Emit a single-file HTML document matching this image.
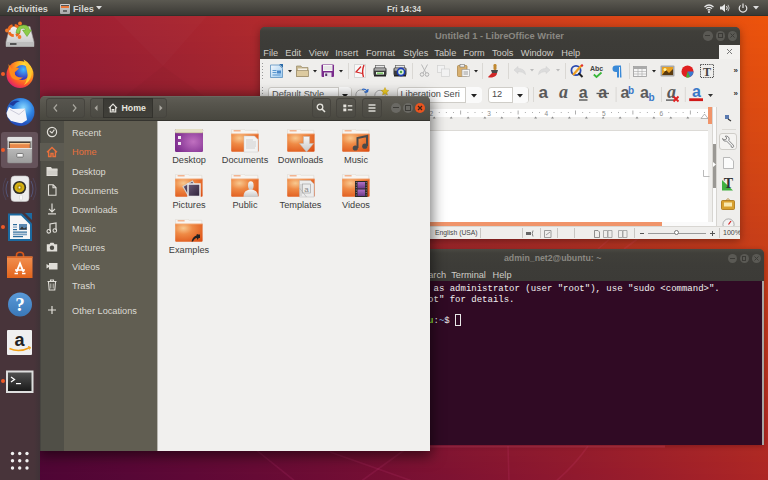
<!DOCTYPE html>
<html><head><meta charset="utf-8">
<style>
*{margin:0;padding:0;box-sizing:border-box}
html,body{width:768px;height:480px;overflow:hidden;font-family:"Liberation Sans",sans-serif}
body{position:relative;background:#9e1d3b}
.a{position:absolute}
svg{position:absolute;overflow:visible}
#wall{left:0;top:0;width:768px;height:480px;overflow:hidden}
#top{z-index:6;left:0;top:0;width:768px;height:16px;background:linear-gradient(#5b5951,#4b4943 50%,#3a3934);border-bottom:1px solid #30312c;color:#d6d6d2;font-size:9px;font-weight:bold;white-space:nowrap}
#dock{left:0;top:16px;width:40px;height:464px;background:linear-gradient(90deg,#48343a 85%,#3f3337);z-index:5}
.dot{position:absolute;left:1px;width:4px;height:4px;border-radius:50%;background:#f05a28}
.t{position:absolute;white-space:nowrap;line-height:1}
</style></head><body>

<svg width="0" height="0" style="position:absolute">
 <defs>
  <radialGradient id="fg" cx=".3" cy=".25" r=".95"><stop offset="0" stop-color="#f8c990"/><stop offset=".35" stop-color="#ef8a45"/><stop offset="1" stop-color="#dc4f14"/></radialGradient>
  <radialGradient id="dg" cx=".65" cy=".55" r=".7"><stop offset="0" stop-color="#c070c0"/><stop offset="1" stop-color="#7a2a8c"/></radialGradient>
  <symbol id="fold" viewBox="0 0 28 23">
   <path d="M0.6 0.3 H13 L14.3 1.3 H26.8 V7 H0.6Z" fill="#f7f5f2" stroke="#d8d2cc" stroke-width=".5"/>
   <rect x="2.6" y="1.4" width="7" height="0.9" fill="#f08a50"/>
   <path d="M0.2 4.7 H27.6 V21.8 Q27.6 22.7 26.7 22.7 H1.1 Q0.2 22.7 0.2 21.8Z" fill="url(#fg)"/>
   <rect x="0.2" y="4.7" width="27.4" height="0.7" fill="#f6b888" opacity=".8"/>
  </symbol>
 </defs>
</svg>
<div id="wall" class="a"><div style="height:6px;background:linear-gradient(90deg,#9c1d35 0px,#a12033 64px,#a72331 128px,#ac272f 192px,#b32a2d 256px,#b92f2a 320px,#c03326 384px,#c73822 448px,#cf3d1e 512px,#d7431a 576px,#df4915 640px,#e74f10 704px,#f0550a 768px)"></div><div style="height:6px;background:linear-gradient(90deg,#9a1d35 0px,#a02033 64px,#a52331 128px,#ab262f 192px,#b12a2d 256px,#b82e2a 320px,#bf3326 384px,#c63723 448px,#ce3d1f 512px,#d5421a 576px,#de4815 640px,#e64e10 704px,#ef550b 768px)"></div><div style="height:6px;background:linear-gradient(90deg,#991d35 0px,#9e1f33 64px,#a42332 128px,#aa262f 192px,#b02a2d 256px,#b72e2a 320px,#be3227 384px,#c53723 448px,#cc3c1f 512px,#d4421a 576px,#dc4816 640px,#e54e10 704px,#ee540b 768px)"></div><div style="height:6px;background:linear-gradient(90deg,#981c35 0px,#9d1f33 64px,#a32232 128px,#a9262f 192px,#af292d 256px,#b62d2a 320px,#bd3227 384px,#c43723 448px,#cb3c1f 512px,#d3411b 576px,#db4716 640px,#e44d11 704px,#ed540b 768px)"></div><div style="height:6px;background:linear-gradient(90deg,#971c35 0px,#9c1f33 64px,#a22232 128px,#a8252f 192px,#ae292d 256px,#b42d2a 320px,#bb3127 384px,#c33623 448px,#ca3b1f 512px,#d2411b 576px,#da4716 640px,#e34d11 704px,#ec530c 768px)"></div><div style="height:6px;background:linear-gradient(90deg,#951c35 0px,#9b1f33 64px,#a02232 128px,#a62530 192px,#ad292d 256px,#b32d2a 320px,#ba3127 384px,#c13623 448px,#c93b1f 512px,#d1401b 576px,#d94616 640px,#e24c11 704px,#ea530c 768px)"></div><div style="height:6px;background:linear-gradient(90deg,#941c35 0px,#991e33 64px,#9f2132 128px,#a52530 192px,#ab282d 256px,#b22c2a 320px,#b93127 384px,#c03524 448px,#c83a20 512px,#d0401b 576px,#d84617 640px,#e14c12 704px,#e9520c 768px)"></div><div style="height:6px;background:linear-gradient(90deg,#931b35 0px,#981e33 64px,#9e2132 128px,#a42430 192px,#aa282d 256px,#b12c2a 320px,#b83027 384px,#bf3524 448px,#c73a20 512px,#cf3f1c 576px,#d74517 640px,#df4b12 704px,#e8520d 768px)"></div><div style="height:6px;background:linear-gradient(90deg,#911b35 0px,#971e33 64px,#9d2132 128px,#a32430 192px,#a9282d 256px,#b02c2b 320px,#b73027 384px,#be3524 448px,#c63a20 512px,#ce3f1c 576px,#d64517 640px,#de4b12 704px,#e7510d 768px)"></div><div style="height:6px;background:linear-gradient(90deg,#901b35 0px,#961d33 64px,#9b2032 128px,#a12430 192px,#a8272d 256px,#ae2b2b 320px,#b52f28 384px,#bd3424 448px,#c43920 512px,#cc3e1c 576px,#d54418 640px,#dd4a13 704px,#e6500d 768px)"></div><div style="height:6px;background:linear-gradient(90deg,#8f1b35 0px,#941d34 64px,#9a2032 128px,#a02330 192px,#a7272e 256px,#ad2b2b 320px,#b42f28 384px,#bc3424 448px,#c33921 512px,#cb3e1c 576px,#d44418 640px,#dc4a13 704px,#e5500e 768px)"></div><div style="height:6px;background:linear-gradient(90deg,#8e1a35 0px,#931d34 64px,#992032 128px,#9f2330 192px,#a5272e 256px,#ac2a2b 320px,#b32f28 384px,#bb3325 448px,#c23821 512px,#ca3d1d 576px,#d34318 640px,#db4913 704px,#e44f0e 768px)"></div><div style="height:6px;background:linear-gradient(90deg,#8d1a35 0px,#921d34 64px,#981f32 128px,#9e2330 192px,#a4262e 256px,#ab2a2b 320px,#b22e28 384px,#b93325 448px,#c13821 512px,#c93d1d 576px,#d14318 640px,#da4813 704px,#e34f0e 768px)"></div><div style="height:6px;background:linear-gradient(90deg,#8b1a35 0px,#911c34 64px,#971f32 128px,#9d2230 192px,#a3262e 256px,#aa2a2b 320px,#b12e28 384px,#b83225 448px,#c03721 512px,#c83c1d 576px,#d04219 640px,#d94814 704px,#e24e0f 768px)"></div><div style="height:6px;background:linear-gradient(90deg,#8a1a35 0px,#901c34 64px,#951f32 128px,#9c2230 192px,#a2252e 256px,#a9292b 320px,#b02d28 384px,#b73225 448px,#bf3721 512px,#c73c1d 576px,#cf4219 640px,#d84714 704px,#e14e0f 768px)"></div><div style="height:6px;background:linear-gradient(90deg,#891935 0px,#8e1c34 64px,#941e32 128px,#9a2230 192px,#a1252e 256px,#a8292c 320px,#af2d29 384px,#b63225 448px,#be3622 512px,#c63c1e 576px,#ce4119 640px,#d74714 704px,#e04d0f 768px)"></div><div style="height:6px;background:linear-gradient(90deg,#881935 0px,#8d1b34 64px,#931e32 128px,#992130 192px,#a0252e 256px,#a6282c 320px,#ae2d29 384px,#b53125 448px,#bd3622 512px,#c53b1e 576px,#cd4119 640px,#d64615 704px,#df4d10 768px)"></div><div style="height:6px;background:linear-gradient(90deg,#861935 0px,#8c1b34 64px,#921e32 128px,#982130 192px,#9f242e 256px,#a5282c 320px,#ac2c29 384px,#b43126 448px,#bc3522 512px,#c43b1e 576px,#cc401a 640px,#d54615 704px,#de4c10 768px)"></div><div style="height:6px;background:linear-gradient(90deg,#851835 0px,#8b1b34 64px,#911e32 128px,#972131 192px,#9d242e 256px,#a4282c 320px,#ab2c29 384px,#b33026 448px,#bb3522 512px,#c33a1e 576px,#cb3f1a 640px,#d44515 704px,#dd4b10 768px)"></div><div style="height:6px;background:linear-gradient(90deg,#841835 0px,#8a1b34 64px,#901d32 128px,#962031 192px,#9c242f 256px,#a3272c 320px,#aa2b29 384px,#b23026 448px,#ba3422 512px,#c23a1f 576px,#ca3f1a 640px,#d34516 704px,#dc4b11 768px)"></div><div style="height:6px;background:linear-gradient(90deg,#831835 0px,#891a34 64px,#8e1d32 128px,#952031 192px,#9b232f 256px,#a2272c 320px,#a92b29 384px,#b12f26 448px,#b93423 512px,#c1391f 576px,#c93e1b 640px,#d24416 704px,#db4a11 768px)"></div><div style="height:6px;background:linear-gradient(90deg,#821835 0px,#871a34 64px,#8d1d32 128px,#942031 192px,#9a232f 256px,#a1262c 320px,#a82a2a 384px,#b02f26 448px,#b73423 512px,#c0391f 576px,#c83e1b 640px,#d14416 704px,#da4a11 768px)"></div><div style="height:6px;background:linear-gradient(90deg,#811735 0px,#861a34 64px,#8c1c33 128px,#921f31 192px,#99222f 256px,#a0262c 320px,#a72a2a 384px,#af2e27 448px,#b63323 512px,#bf381f 576px,#c73d1b 640px,#d04316 704px,#d94912 768px)"></div><div style="height:6px;background:linear-gradient(90deg,#7f1735 0px,#851934 64px,#8b1c33 128px,#911f31 192px,#98222f 256px,#9f262d 320px,#a62a2a 384px,#ae2e27 448px,#b53323 512px,#be3820 576px,#c63d1b 640px,#cf4317 704px,#d84912 768px)"></div><div style="height:6px;background:linear-gradient(90deg,#7e1735 0px,#841934 64px,#8a1c33 128px,#901e31 192px,#97222f 256px,#9e252d 320px,#a5292a 384px,#ad2d27 448px,#b43224 512px,#bd3720 576px,#c53c1c 640px,#ce4217 704px,#d74812 768px)"></div><div style="height:6px;background:linear-gradient(90deg,#7d1635 0px,#831934 64px,#891b33 128px,#8f1e31 192px,#96212f 256px,#9d252d 320px,#a4292a 384px,#ab2d27 448px,#b33224 512px,#bc3720 576px,#c43c1c 640px,#cd4117 704px,#d64712 768px)"></div><div style="height:6px;background:linear-gradient(90deg,#7c1635 0px,#821834 64px,#881b33 128px,#8e1e31 192px,#95212f 256px,#9c242d 320px,#a3282a 384px,#aa2d27 448px,#b23124 512px,#bb3620 576px,#c33b1c 640px,#cc4118 704px,#d54713 768px)"></div><div style="height:6px;background:linear-gradient(90deg,#7b1635 0px,#811834 64px,#871b33 128px,#8d1d31 192px,#94212f 256px,#9b242d 320px,#a2282b 384px,#a92c28 448px,#b13124 512px,#ba3620 576px,#c23b1c 640px,#cb4018 704px,#d44613 768px)"></div><div style="height:6px;background:linear-gradient(90deg,#7a1635 0px,#801834 64px,#861a33 128px,#8c1d31 192px,#93202f 256px,#9a242d 320px,#a1272b 384px,#a82c28 448px,#b03024 512px,#b93521 576px,#c13a1d 640px,#ca4018 704px,#d34613 768px)"></div><div style="height:6px;background:linear-gradient(90deg,#791535 0px,#7e1734 64px,#841a33 128px,#8b1d31 192px,#922030 256px,#99232d 320px,#a0272b 384px,#a72b28 448px,#af3025 512px,#b83521 576px,#c03a1d 640px,#c93f19 704px,#d24514 768px)"></div><div style="height:6px;background:linear-gradient(90deg,#781535 0px,#7d1734 64px,#831a33 128px,#8a1c32 192px,#901f30 256px,#97232e 320px,#9f272b 384px,#a62b28 448px,#ae2f25 512px,#b73421 576px,#bf391d 640px,#c83f19 704px,#d14514 768px)"></div><div style="height:6px;background:linear-gradient(90deg,#771535 0px,#7c1734 64px,#821933 128px,#891c32 192px,#8f1f30 256px,#96222e 320px,#9e262b 384px,#a52a28 448px,#ad2f25 512px,#b63421 576px,#be391e 640px,#c73e19 704px,#d14414 768px)"></div><div style="height:6px;background:linear-gradient(90deg,#751435 0px,#7b1634 64px,#811933 128px,#881c32 192px,#8e1f30 256px,#95222e 320px,#9d262b 384px,#a42a29 448px,#ac2e25 512px,#b53322 576px,#bd381e 640px,#c63e19 704px,#d04315 768px)"></div><div style="height:6px;background:linear-gradient(90deg,#741435 0px,#7a1634 64px,#801833 128px,#871b32 192px,#8d1e30 256px,#94222e 320px,#9c252c 384px,#a42929 448px,#ac2e26 512px,#b43222 576px,#bc381e 640px,#c53d1a 704px,#cf4315 768px)"></div><div style="height:6px;background:linear-gradient(90deg,#731435 0px,#791634 64px,#7f1833 128px,#861b32 192px,#8c1e30 256px,#93212e 320px,#9b252c 384px,#a32929 448px,#ab2d26 512px,#b33222 576px,#bc371e 640px,#c53c1a 704px,#ce4215 768px)"></div><div style="height:6px;background:linear-gradient(90deg,#721435 0px,#781534 64px,#7e1833 128px,#851a32 192px,#8b1d30 256px,#92212e 320px,#9a242c 384px,#a22829 448px,#aa2d26 512px,#b23122 576px,#bb361f 640px,#c43c1a 704px,#cd4216 768px)"></div><div style="height:6px;background:linear-gradient(90deg,#711335 0px,#771534 64px,#7d1733 128px,#841a32 192px,#8a1d30 256px,#91202e 320px,#99242c 384px,#a12829 448px,#a92c26 512px,#b13123 576px,#ba361f 640px,#c33b1b 704px,#cc4116 768px)"></div><div style="height:6px;background:linear-gradient(90deg,#701335 0px,#761534 64px,#7c1733 128px,#831a32 192px,#891d30 256px,#90202f 320px,#98232c 384px,#a02729 448px,#a82c26 512px,#b03023 576px,#b9351f 640px,#c23b1b 704px,#cb4016 768px)"></div><div style="height:6px;background:linear-gradient(90deg,#6f1335 0px,#751434 64px,#7b1733 128px,#821932 192px,#881c31 256px,#901f2f 320px,#97232c 384px,#9f272a 448px,#a72b27 512px,#af3023 576px,#b8351f 640px,#c13a1b 704px,#ca4017 768px)"></div><div style="height:6px;background:linear-gradient(90deg,#6e1235 0px,#741434 64px,#7a1633 128px,#811932 192px,#871c31 256px,#8f1f2f 320px,#96232d 384px,#9e262a 448px,#a62b27 512px,#ae2f23 576px,#b73420 640px,#c03a1c 704px,#c93f17 768px)"></div><div style="height:6px;background:linear-gradient(90deg,#6d1235 0px,#731434 64px,#791633 128px,#801832 192px,#861b31 256px,#8e1f2f 320px,#95222d 384px,#9d262a 448px,#a52a27 512px,#ad2f24 576px,#b63420 640px,#bf391c 704px,#c93f17 768px)"></div><div style="height:6px;background:linear-gradient(90deg,#6c1235 0px,#721334 64px,#781634 128px,#7f1832 192px,#851b31 256px,#8d1e2f 320px,#94222d 384px,#9c262a 448px,#a42a27 512px,#ad2e24 576px,#b53320 640px,#be381c 704px,#c83e18 768px)"></div><div style="height:6px;background:linear-gradient(90deg,#6b1135 0px,#711334 64px,#771534 128px,#7e1832 192px,#851b31 256px,#8c1e2f 320px,#93212d 384px,#9b252a 448px,#a32928 512px,#ac2e24 576px,#b43321 640px,#be381d 704px,#c73d18 768px)"></div><div style="height:6px;background:linear-gradient(90deg,#6a1135 0px,#701334 64px,#761534 128px,#7d1733 192px,#841a31 256px,#8b1d2f 320px,#92212d 384px,#9a252b 448px,#a22928 512px,#ab2d24 576px,#b43221 640px,#bd371d 704px,#c63d18 768px)"></div><div style="height:6px;background:linear-gradient(90deg,#691135 0px,#6f1234 64px,#751534 128px,#7c1733 192px,#831a31 256px,#8a1d2f 320px,#91202d 384px,#99242b 448px,#a12828 512px,#aa2d25 576px,#b33221 640px,#bc371d 704px,#c53c19 768px)"></div><div style="height:6px;background:linear-gradient(90deg,#681035 0px,#6e1234 64px,#741434 128px,#7b1733 192px,#821931 256px,#891c30 320px,#90202d 384px,#98242b 448px,#a12828 512px,#a92c25 576px,#b23121 640px,#bb361d 704px,#c43c19 768px)"></div><div style="height:6px;background:linear-gradient(90deg,#671035 0px,#6d1234 64px,#731434 128px,#7a1633 192px,#811931 256px,#881c30 320px,#901f2e 384px,#97232b 448px,#a02728 512px,#a82c25 576px,#b13022 640px,#ba361e 704px,#c43b19 768px)"></div><div style="height:6px;background:linear-gradient(90deg,#661035 0px,#6c1134 64px,#721334 128px,#791633 192px,#801832 256px,#871b30 320px,#8f1f2e 384px,#97232b 448px,#9f2729 512px,#a72b25 576px,#b03022 640px,#b9351e 704px,#c33a1a 768px)"></div><div style="height:6px;background:linear-gradient(90deg,#650f35 0px,#6b1134 64px,#711334 128px,#781533 192px,#7f1832 256px,#861b30 320px,#8e1e2e 384px,#96222c 448px,#9e2629 512px,#a72b26 576px,#af2f22 640px,#b9341e 704px,#c23a1a 768px)"></div><div style="height:6px;background:linear-gradient(90deg,#640f35 0px,#6a1134 64px,#701334 128px,#771533 192px,#7e1832 256px,#851b30 320px,#8d1e2e 384px,#95222c 448px,#9d2629 512px,#a62a26 576px,#af2f22 640px,#b8341f 704px,#c1391a 768px)"></div><div style="height:6px;background:linear-gradient(90deg,#630f35 0px,#691035 64px,#6f1234 128px,#761533 192px,#7d1732 256px,#841a30 320px,#8c1d2e 384px,#94212c 448px,#9c2529 512px,#a52926 576px,#ae2e23 640px,#b7331f 704px,#c1391b 768px)"></div><div style="height:6px;background:linear-gradient(90deg,#620e35 0px,#681035 64px,#6f1234 128px,#751433 192px,#7c1732 256px,#841a30 320px,#8b1d2e 384px,#93212c 448px,#9b2529 512px,#a42926 576px,#ad2e23 640px,#b6331f 704px,#c0381b 768px)"></div><div style="height:6px;background:linear-gradient(90deg,#610e35 0px,#671035 64px,#6e1234 128px,#741433 192px,#7b1632 256px,#831931 320px,#8a1c2f 384px,#92202c 448px,#9b242a 512px,#a32827 576px,#ac2d23 640px,#b53220 704px,#bf371b 768px)"></div><div style="height:6px;background:linear-gradient(90deg,#600e35 0px,#660f35 64px,#6d1134 128px,#731333 192px,#7a1632 256px,#821931 320px,#891c2f 384px,#91202d 448px,#9a242a 512px,#a22827 576px,#ab2c24 640px,#b53120 704px,#be371c 768px)"></div><div style="height:6px;background:linear-gradient(90deg,#5f0d35 0px,#650f35 64px,#6c1134 128px,#731333 192px,#7a1532 256px,#811831 320px,#891c2f 384px,#911f2d 448px,#99232a 512px,#a22727 576px,#ab2c24 640px,#b43120 704px,#bd361c 768px)"></div><div style="height:6px;background:linear-gradient(90deg,#5e0d35 0px,#640f35 64px,#6b1034 128px,#721334 192px,#791532 256px,#801831 320px,#881b2f 384px,#901f2d 448px,#98222a 512px,#a12727 576px,#aa2b24 640px,#b33020 704px,#bd351c 768px)"></div><div style="height:6px;background:linear-gradient(90deg,#5d0d35 0px,#640e35 64px,#6a1034 128px,#711234 192px,#781533 256px,#7f1731 320px,#871b2f 384px,#8f1e2d 448px,#97222b 512px,#a02628 576px,#a92b24 640px,#b23021 704px,#bc351d 768px)"></div><div style="height:6px;background:linear-gradient(90deg,#5c0c35 0px,#630e35 64px,#691034 128px,#701234 192px,#771433 256px,#7e1731 320px,#861a2f 384px,#8e1e2d 448px,#97212b 512px,#9f2628 576px,#a82a25 640px,#b22f21 704px,#bb341d 768px)"></div><div style="height:6px;background:linear-gradient(90deg,#5c0c35 0px,#620d35 64px,#680f34 128px,#6f1134 192px,#761433 256px,#7e1631 320px,#851a30 384px,#8d1d2e 448px,#96212b 512px,#9f2528 576px,#a82925 640px,#b12e21 704px,#bb341d 768px)"></div><div style="height:6px;background:linear-gradient(90deg,#5b0c35 0px,#610d35 64px,#670f35 128px,#6e1134 192px,#751333 256px,#7d1632 320px,#851930 384px,#8d1d2e 448px,#95202b 512px,#9e2428 576px,#a72925 640px,#b02e22 704px,#ba331e 768px)"></div><div style="height:6px;background:linear-gradient(90deg,#5a0b35 0px,#600d35 64px,#670e35 128px,#6d1034 192px,#741333 256px,#7c1632 320px,#841930 384px,#8c1c2e 448px,#94202c 512px,#9d2429 576px,#a62826 640px,#af2d22 704px,#b9321e 768px)"></div><div style="height:6px;background:linear-gradient(90deg,#590b35 0px,#5f0c35 64px,#660e35 128px,#6c1034 192px,#741233 256px,#7b1532 320px,#831830 384px,#8b1c2e 448px,#931f2c 512px,#9c2329 576px,#a52826 640px,#af2d22 704px,#b8321e 768px)"></div><div style="height:6px;background:linear-gradient(90deg,#580b35 0px,#5e0c35 64px,#650e35 128px,#6c1034 192px,#731233 256px,#7a1532 320px,#821830 384px,#8a1b2e 448px,#931f2c 512px,#9c2329 576px,#a52726 640px,#ae2c23 704px,#b8311f 768px)"></div><div style="height:6px;background:linear-gradient(90deg,#570a35 0px,#5d0c35 64px,#640d35 128px,#6b0f34 192px,#721133 256px,#7a1432 320px,#811731 384px,#8a1a2f 448px,#921e2c 512px,#9b2229 576px,#a42726 640px,#ad2b23 704px,#b7301f 768px)"></div><div style="height:6px;background:linear-gradient(90deg,#560a35 0px,#5d0b35 64px,#630d35 128px,#6a0f34 192px,#711133 256px,#791432 320px,#811731 384px,#891a2f 448px,#911e2c 512px,#9a222a 576px,#a32627 640px,#ad2b23 704px,#b6301f 768px)"></div><div style="height:6px;background:linear-gradient(90deg,#550a35 0px,#5c0b35 64px,#620c35 128px,#690e34 192px,#701134 256px,#781332 320px,#801631 384px,#88192f 448px,#911d2d 512px,#99212a 576px,#a22527 640px,#ac2a24 704px,#b62f20 768px)"></div><div style="height:6px;background:linear-gradient(90deg,#550935 0px,#5b0a35 64px,#610c35 128px,#680e35 192px,#701034 256px,#771333 320px,#7f1631 384px,#87192f 448px,#901d2d 512px,#99202a 576px,#a22527 640px,#ab2924 704px,#b52e20 768px)"></div><div style="height:6px;background:linear-gradient(90deg,#540935 0px,#5a0a35 64px,#610c35 128px,#680d35 192px,#6f1034 256px,#761233 320px,#7e1531 384px,#87182f 448px,#8f1c2d 512px,#98202a 576px,#a12427 640px,#ab2924 704px,#b42e20 768px)"></div><div style="height:6px;background:linear-gradient(90deg,#530935 0px,#590a35 64px,#600b35 128px,#670d35 192px,#6e0f34 256px,#761233 320px,#7e1531 384px,#861830 448px,#8e1b2d 512px,#971f2b 576px,#a02428 640px,#aa2824 704px,#b42d21 768px)"></div><div style="height:6px;background:linear-gradient(90deg,#520835 0px,#580935 64px,#5f0b35 128px,#660d35 192px,#6d0f34 256px,#751133 320px,#7d1432 384px,#851730 448px,#8e1b2e 512px,#971f2b 576px,#a02328 640px,#a92825 704px,#b32c21 768px)"></div><div style="height:6px;background:linear-gradient(90deg,#510835 0px,#580935 64px,#5e0a35 128px,#650c35 192px,#6d0e34 256px,#741133 320px,#7c1432 384px,#841730 448px,#8d1a2e 512px,#961e2b 576px,#9f2228 640px,#a92725 704px,#b22c21 768px)"></div><div style="height:6px;background:linear-gradient(90deg,#500735 0px,#570935 64px,#5d0a35 128px,#640c35 192px,#6c0e34 256px,#731033 320px,#7b1332 384px,#841630 448px,#8c1a2e 512px,#951e2b 576px,#9e2229 640px,#a82625 704px,#b22b22 768px)"></div><div style="height:6px;background:linear-gradient(90deg,#500735 0px,#560835 64px,#5d0a35 128px,#640b35 192px,#6b0d34 256px,#731033 320px,#7b1332 384px,#831630 448px,#8c192e 512px,#941d2c 576px,#9e2129 640px,#a72626 704px,#b12b22 768px)"></div><div style="height:6px;background:linear-gradient(90deg,#4f0735 0px,#550835 64px,#5c0935 128px,#630b35 192px,#6a0d35 256px,#720f34 320px,#7a1232 384px,#821531 448px,#8b192e 512px,#941c2c 576px,#9d2129 640px,#a72526 704px,#b12a22 768px)"></div><div style="height:6px;background:linear-gradient(90deg,#4e0635 0px,#540735 64px,#5b0935 128px,#620a35 192px,#6a0c35 256px,#710f34 320px,#791232 384px,#821531 448px,#8a182f 512px,#931c2c 576px,#9c2029 640px,#a62426 704px,#b02923 768px)"></div><div style="height:6px;background:linear-gradient(90deg,#4d0635 0px,#540735 64px,#5a0835 128px,#610a35 192px,#690c35 256px,#710e34 320px,#791133 384px,#811431 448px,#8a182f 512px,#921b2c 576px,#9c1f2a 640px,#a52427 704px,#af2923 768px)"></div><div style="height:6px;background:linear-gradient(90deg,#4c0635 0px,#530735 64px,#5a0836 128px,#610a35 192px,#680c35 256px,#700e34 320px,#781133 384px,#801431 448px,#89172f 512px,#921b2d 576px,#9b1f2a 640px,#a52327 704px,#af2823 768px)"></div><div style="height:6px;background:linear-gradient(90deg,#4c0535 0px,#520635 64px,#590736 128px,#600935 192px,#670b35 256px,#6f0d34 320px,#771033 384px,#801331 448px,#88162f 512px,#911a2d 576px,#9b1e2a 640px,#a42227 704px,#ae2724 768px)"></div><div style="height:6px;background:linear-gradient(90deg,#4b0535 0px,#510635 64px,#580736 128px,#5f0936 192px,#670b35 256px,#6e0d34 320px,#760f33 384px,#7f1231 448px,#881630 512px,#91192d 576px,#9a1d2b 640px,#a42228 704px,#ae2724 768px)"></div><div style="height:6px;background:linear-gradient(90deg,#4a0435 0px,#510535 64px,#570736 128px,#5f0836 192px,#660a35 256px,#6e0c34 320px,#760f33 384px,#7e1232 448px,#871530 512px,#90192e 576px,#991d2b 640px,#a32128 704px,#ad2624 768px)"></div></div>
<svg class="a" style="left:0;top:0;z-index:0" width="768" height="480" viewBox="0 0 768 480">
 <g stroke="rgba(255,90,170,0.1)" stroke-width="1.6" fill="none">
  <path d="M255 449 L296 482"/>
  <path d="M430 446.5 H665" stroke-width="2" stroke="rgba(255,110,150,0.2)"/>
  <path d="M330 452 L415 482"/>
  <path d="M410 446 L360 482"/>
  <path d="M508 446 L509 482"/>
  <path d="M588 446 Q575 465 555 482"/>
  <path d="M598 249 L612 237"/>
  <path d="M624 249 L640 237"/>
 </g>
 <path d="M113 16 L207 16 L163 66Z" fill="rgba(255,255,255,0.015)"/>
 <path d="M163 66 L215 104 L115 104Z" fill="rgba(0,0,0,0.025)"/>
</svg>

<!-- TOP BAR -->
<div id="top" class="a">
  <div class="t" style="left:7px;top:4.5px;font-size:9.2px">Activities</div>
  <div class="a" style="left:60px;top:3.5px;width:9.5px;height:10px;background:linear-gradient(#cfcfcf,#a8a8a8);border-radius:1px"><div class="a" style="left:1px;top:1.5px;width:7.5px;height:3px;background:#e8773a;border-top:1px solid #555"></div><div class="a" style="left:3px;top:6px;width:3.5px;height:2px;background:#eee;border:.5px solid #666"></div></div>
  <div class="t" style="left:73px;top:4.5px;font-size:9.2px">Files</div>
  <svg style="left:96px;top:6px" width="6" height="4"><path d="M0 0H6L3 3.5Z" fill="#ddd"/></svg>
  <div class="t" style="left:387px;top:4.5px;font-size:8.3px">Fri 14:34</div>
  <svg style="left:704px;top:3px" width="10" height="10" viewBox="0 0 10 10"><path d="M0.5 4 Q5 0 9.5 4" stroke="#e8e8e8" stroke-width="1.2" fill="none"/><path d="M2 5.6 Q5 3 8 5.6" stroke="#e8e8e8" stroke-width="1.2" fill="none"/><path d="M3.6 7.2 Q5 6 6.4 7.2" stroke="#e8e8e8" stroke-width="1.2" fill="none"/><circle cx="5" cy="9" r="1" fill="#e8e8e8"/></svg>
  <svg style="left:720px;top:3px" width="11" height="10" viewBox="0 0 11 10"><path d="M0 3.5H2L5 1V9L2 6.5H0Z" fill="#e8e8e8"/><path d="M6.5 3 Q8 5 6.5 7" stroke="#e8e8e8" stroke-width="1" fill="none"/><path d="M8 1.8 Q10.3 5 8 8.2" stroke="#bbb" stroke-width="1" fill="none"/></svg>
  <svg style="left:738px;top:3px" width="10" height="10" viewBox="0 0 10 10"><path d="M2.6 2.4 A3.8 3.8 0 1 0 7.4 2.4" stroke="#e8e8e8" stroke-width="1.2" fill="none"/><path d="M5 0.5V5" stroke="#e8e8e8" stroke-width="1.2"/></svg>
  <svg style="left:753px;top:6px" width="6" height="4"><path d="M0 0H6L3 3.5Z" fill="#ddd"/></svg>
</div>

<!-- DOCK -->
<div id="dock" class="a">
  <!-- installer disk -->
  <svg style="left:0;top:0" width="40" height="40" viewBox="0 0 40 40">
    <defs><linearGradient id="dk" x1="0" y1="0" x2="0" y2="1"><stop offset="0" stop-color="#f2f2f2"/><stop offset="1" stop-color="#c4c4c4"/></linearGradient></defs>
    <path d="M10 10.5 H30 L34 26 V30.5 H6 V26Z" fill="url(#dk)" stroke="#a0a0a0" stroke-width=".6"/>
    <path d="M6 26 H34 V30.5 H6Z" fill="#bdbdbd"/>
    <rect x="10" y="27.2" width="6.5" height="1.6" fill="#3a3a3a"/>
    <circle cx="14" cy="14.5" r="5.2" fill="none" stroke="#ee6a1e" stroke-width="2.8" stroke-dasharray="6 2.2"/>
    <circle cx="20" cy="7.5" r="1.9" fill="#f47a2a"/><circle cx="7" cy="14.5" r="1.9" fill="#f47a2a"/><circle cx="19.5" cy="21" r="1.9" fill="#f47a2a"/>
    <path d="M16 17 Q16.5 9.5 23.5 9 Q29 9 29.5 14 L31.5 14 L27 20.5 L22.5 14 L25.5 14 Q25 12 23 12.2 Q19.5 12.8 19.5 17.5Z" fill="#8ccc48" stroke="#5a9a28" stroke-width=".5"/>
  </svg>
  <!-- firefox -->
  <div class="dot" style="top:56px"></div>
  <svg style="left:0;top:40px" width="40" height="40" viewBox="0 0 40 40">
    <defs>
      <radialGradient id="ff1" cx=".75" cy=".2" r=".95"><stop offset="0" stop-color="#fff04a"/><stop offset=".35" stop-color="#ffb020"/><stop offset=".7" stop-color="#ff5a28"/><stop offset="1" stop-color="#d8127a"/></radialGradient>
      <radialGradient id="ff2" cx=".6" cy=".3" r=".7"><stop offset="0" stop-color="#40b8ff"/><stop offset="1" stop-color="#3a2ab8"/></radialGradient>
    </defs>
    <circle cx="20" cy="18.5" r="13.5" fill="url(#ff1)"/>
    <circle cx="22" cy="16.5" r="7.5" fill="url(#ff2)"/>
    <path d="M8.5 8 L12 13 Q16 10.5 19 12.5 L14.5 16.5 Q15 22 23 21.5 Q18 26 12 22 Q9 18 8.5 8Z" fill="#ff8a1c"/>
    <path d="M23.5 3.5 Q33 8 31.5 19 Q30 26 24 29 Q29 22 27 15 Q26 10 23.5 3.5Z" fill="#ffc830"/>
  </svg>
  <!-- thunderbird -->
  <svg style="left:0;top:76px" width="40" height="40" viewBox="0 0 40 40">
    <defs><radialGradient id="tb" cx=".6" cy=".35" r=".75"><stop offset="0" stop-color="#8ad8ff"/><stop offset=".45" stop-color="#2f84e4"/><stop offset="1" stop-color="#1a3aa0"/></radialGradient></defs>
    <circle cx="20.5" cy="20" r="14" fill="url(#tb)"/>
    <path d="M9 12 Q14 7 20 9 Q16 10 13 14Z" fill="#1c3a9c"/>
    <path d="M6.5 21 L9 15 L12.5 17 L25 16.5 L27 28 L21.5 31.5 L11 29 L7.5 25Z" fill="#f4f4f8"/>
    <path d="M10 17.5 L19 22.5 L25.5 17" stroke="#c0c0d0" stroke-width=".8" fill="none"/>
    <path d="M12 30 Q18 34 26 31" stroke="#2a50c0" stroke-width="1.5" fill="none"/>
  </svg>
  <!-- files (active) -->
  <div class="a" style="left:1px;top:116px;width:37px;height:36px;border-radius:3px;background:#65525a"></div>
  <div class="dot" style="top:132px"></div>
  <svg style="left:0;top:114px" width="40" height="40" viewBox="0 0 40 40">
    <defs><linearGradient id="cab" x1="0" y1="0" x2="0" y2="1"><stop offset="0" stop-color="#cfcfcf"/><stop offset="1" stop-color="#9c9c9c"/></linearGradient></defs>
    <rect x="7.5" y="7" width="24.5" height="26" rx="1.5" fill="url(#cab)" stroke="#8a8a8a" stroke-width=".5"/>
    <rect x="7.5" y="7" width="24.5" height="4" rx="1" fill="#e2e2e2"/>
    <rect x="9" y="11.5" width="21.5" height="6.5" fill="#4a4038"/>
    <rect x="9.8" y="13" width="20" height="5" fill="#e8884a"/>
    <rect x="9.8" y="13" width="20" height="1.2" fill="#f8c890"/>
    <rect x="7.5" y="18" width="24.5" height="1" fill="#e6e6e6"/>
    <rect x="16.8" y="23.5" width="6.4" height="3.6" rx=".5" fill="#f4f4f4" stroke="#666" stroke-width=".8"/>
  </svg>
  <!-- rhythmbox -->
  <svg style="left:0;top:154px" width="40" height="40" viewBox="0 0 40 40">
    <path d="M8 11 Q4 19 8 27" stroke="#5a6aa0" stroke-width="1" fill="none" opacity=".6"/>
    <path d="M31 11 Q35 19 31 27" stroke="#5a6aa0" stroke-width="1" fill="none" opacity=".6"/>
    <path d="M6 8 Q0 19 6 30" stroke="#5a6aa0" stroke-width=".8" fill="none" opacity=".35"/>
    <path d="M33 8 Q39 19 33 30" stroke="#5a6aa0" stroke-width=".8" fill="none" opacity=".35"/>
    <rect x="11" y="6" width="18" height="25.5" rx="3.5" fill="#ececec" stroke="#c4c4c4" stroke-width=".6"/>
    <circle cx="19.5" cy="17.5" r="6.6" fill="#2e2e28"/>
    <circle cx="19.5" cy="17.5" r="5" fill="#d4b010"/>
    <circle cx="19.5" cy="17.5" r="2.5" fill="#b09010"/>
    <circle cx="19.5" cy="17.5" r="1" fill="#eee"/>
    <rect x="19.5" y="25" width="3" height="5" rx="1" fill="#fafafa" stroke="#ccc" stroke-width=".5"/>
  </svg>
  <!-- libreoffice writer -->
  <div class="dot" style="top:209px"></div>
  <svg style="left:0;top:192px" width="40" height="40" viewBox="0 0 40 40">
    <path d="M8 5.5 H22 L32 15.5 V33 H8Z" fill="#1c6aa0"/>
    <path d="M10 7.5 H21 L30 16.5 V31 H10Z" fill="#f6f6f6"/>
    <path d="M25 5 H32 V12Z" fill="#1c6aa0"/>
    <rect x="13" y="16" width="4" height="1.2" fill="#2a6a9a"/><rect x="13" y="18.5" width="4" height="1.2" fill="#7aa0c0"/><rect x="13" y="21" width="4" height="1.2" fill="#2a6a9a"/>
    <rect x="19" y="16" width="8" height="6" fill="#5a88b0"/>
    <path d="M19.5 21.5 L22 18.5 L24 20.5 L26.5 19 V21.5Z" fill="#333"/>
    <rect x="13" y="23.5" width="14" height="1.2" fill="#2a6a9a"/><rect x="13" y="25.5" width="14" height="1.8" fill="#7aa0c0"/><rect x="13" y="28" width="10" height="1.2" fill="#2a6a9a"/>
  </svg>
  <!-- software -->
  <svg style="left:0;top:230px" width="40" height="40" viewBox="0 0 40 40">
    <defs><linearGradient id="sw" x1="0" y1="0" x2="0" y2="1"><stop offset="0" stop-color="#f29050"/><stop offset="1" stop-color="#e2641c"/></linearGradient></defs>
    <path d="M16.5 13 V9 Q16.5 6.2 20 6.2 Q23.5 6.2 23.5 9 V13" stroke="#d8581a" stroke-width="1.6" fill="none"/>
    <rect x="7" y="10.5" width="25.5" height="21.5" fill="url(#sw)"/>
    <rect x="7" y="10.5" width="25.5" height="1.5" fill="#e06a2a"/>
    <path d="M16.5 26 L20 17.5 L23.5 26" stroke="#fff" stroke-width="1.9" fill="none"/>
    <path d="M15 24 H25 M14.5 27.5 H18 M22 27.5 H25.5" stroke="#fff" stroke-width="1.3"/>
  </svg>
  <!-- help -->
  <svg style="left:0;top:268px" width="40" height="40" viewBox="0 0 40 40">
    <defs><linearGradient id="hp" x1="0" y1="0" x2="0" y2="1"><stop offset="0" stop-color="#5a9ad8"/><stop offset="1" stop-color="#3a78b8"/></linearGradient></defs>
    <circle cx="20" cy="20.5" r="12" fill="url(#hp)"/>
    <text x="20" y="27.2" text-anchor="middle" font-family="Liberation Serif" font-weight="bold" font-size="19" fill="#fff">?</text>
  </svg>
  <!-- amazon -->
  <svg style="left:0;top:306px" width="40" height="40" viewBox="0 0 40 40">
    <rect x="7" y="8" width="25" height="25" rx="1" fill="#f0f0f0"/>
    <text x="19.5" y="24" text-anchor="middle" font-family="Liberation Sans" font-weight="bold" font-size="18" fill="#222">a</text>
    <path d="M9.5 26.5 Q19 31 30 25.5" stroke="#f0a018" stroke-width="1.5" fill="none"/>
    <path d="M28 24.5 L30.5 25.3 L29.5 27.5" stroke="#f0a018" stroke-width="1" fill="none"/>
  </svg>
  <!-- terminal -->
  <div class="dot" style="top:363px"></div>
  <svg style="left:0;top:344px" width="40" height="40" viewBox="0 0 40 40">
    <defs><linearGradient id="tm" x1="0" y1="0" x2="0" y2="1"><stop offset="0" stop-color="#505050"/><stop offset="1" stop-color="#1a1a1a"/></linearGradient></defs>
    <rect x="6" y="10.5" width="27.5" height="22.5" fill="#dedede"/>
    <rect x="8" y="12.5" width="23.5" height="18.5" fill="url(#tm)"/>
    <path d="M11 17 L14.5 19.5 L11 22" stroke="#fff" stroke-width="1.3" fill="none"/>
    <rect x="16" y="23" width="5" height="1.2" fill="#fff"/>
  </svg>
  <!-- grid -->
  <svg style="left:0;top:424px" width="40" height="40" viewBox="0 0 40 40">
    <g fill="#f2f2f2"><circle cx="12.5" cy="13.5" r="1.7"/><circle cx="19.7" cy="13.5" r="1.7"/><circle cx="27" cy="13.5" r="1.7"/><circle cx="12.5" cy="20.8" r="1.7"/><circle cx="19.7" cy="20.8" r="1.7"/><circle cx="27" cy="20.8" r="1.7"/><circle cx="12.5" cy="28" r="1.7"/><circle cx="19.7" cy="28" r="1.7"/><circle cx="27" cy="28" r="1.7"/></g>
  </svg>
</div>


<!-- ================= LIBREOFFICE WINDOW ================= -->
<div class="a" style="left:260px;top:27px;width:480px;height:212px;box-shadow:0 2px 8px rgba(0,0,0,.35);border-radius:5px 5px 0 0"></div>
<div class="a" id="lo" style="left:260px;top:27px;width:480px;height:212px;overflow:hidden;border-radius:5px 5px 0 0;background:linear-gradient(#45443e 0,#3c3b37 32px,#efeeec 32px)">
  <div class="a" style="left:0;top:0;width:480px;height:32px;background:linear-gradient(#4a4943,#403f3a 4px,#3d3c38 16px,#3c3b37)"></div>
  <div class="a" style="left:459px;top:18px;width:21px;height:14px;background:#f2f1ef"></div>
  <div class="t" style="left:175px;top:5px;font-size:9.3px;font-weight:bold;color:#8a8882">Untitled 1 - LibreOffice Writer</div>
  <div class="a" style="left:443px;top:4px;width:9.5px;height:9.5px;border-radius:50%;background:#5a5954"></div>
  <div class="a" style="left:445.3px;top:8.2px;width:5px;height:1.1px;background:#3c3b37"></div>
  <div class="a" style="left:455.5px;top:4px;width:9.5px;height:9.5px;border-radius:50%;background:#5a5954"></div>
  <div class="a" style="left:457.8px;top:6.3px;width:5px;height:5px;border:1px solid #3c3b37"></div>
  <div class="a" style="left:467.5px;top:4px;width:9.5px;height:9.5px;border-radius:50%;background:#5a5954"></div>
  <svg style="left:469.7px;top:6.2px" width="5" height="5"><path d="M.5 .5 L4.5 4.5 M4.5 .5 L.5 4.5" stroke="#3c3b37" stroke-width="1"/></svg>
<div class="t" style="left:3.3px;top:21.5px;font-size:9.2px;color:#cfcdc6">File</div><div class="t" style="left:25.3px;top:21.5px;font-size:9.2px;color:#cfcdc6">Edit</div><div class="t" style="left:48.7px;top:21.5px;font-size:9.2px;color:#cfcdc6">View</div><div class="t" style="left:75.3px;top:21.5px;font-size:9.2px;color:#cfcdc6">Insert</div><div class="t" style="left:106.0px;top:21.5px;font-size:9.2px;color:#cfcdc6">Format</div><div class="t" style="left:143.3px;top:21.5px;font-size:9.2px;color:#cfcdc6">Styles</div><div class="t" style="left:174.3px;top:21.5px;font-size:9.2px;color:#cfcdc6">Table</div><div class="t" style="left:203.3px;top:21.5px;font-size:9.2px;color:#cfcdc6">Form</div><div class="t" style="left:232.0px;top:21.5px;font-size:9.2px;color:#cfcdc6">Tools</div><div class="t" style="left:260.8px;top:21.5px;font-size:9.2px;color:#cfcdc6">Window</div><div class="t" style="left:301.3px;top:21.5px;font-size:9.2px;color:#cfcdc6">Help</div>
  <svg style="left:466px;top:21px" width="7" height="7"><path d="M1 1 L6 6 M6 1 L1 6" stroke="#7a7a7a" stroke-width="1"/></svg>

  <!-- toolbar 1 -->
  <svg style="left:1px;top:36px" width="3" height="16"><g fill="#9a9a9a"><rect x="1" y="0" width="1" height="1"/><rect x="1" y="3" width="1" height="1"/><rect x="1" y="6" width="1" height="1"/><rect x="1" y="9" width="1" height="1"/><rect x="1" y="12" width="1" height="1"/><rect x="1" y="15" width="1" height="1"/></g></svg>
  <svg style="left:10px;top:37px" width="13" height="14" viewBox="0 0 13 14"><defs><linearGradient id="nw" x1="0" y1="0" x2="1" y2="1"><stop offset="0" stop-color="#f4f8fc"/><stop offset="1" stop-color="#9ccaf0"/></linearGradient></defs><path d="M0.5 1 H9 L12.5 4.5 V13.5 H0.5Z" fill="url(#nw)" stroke="#5a90c0" stroke-width=".8"/><rect x="2.5" y="6" width="4" height="1" fill="#5a98d0"/><rect x="2.5" y="8" width="4" height="1" fill="#5a98d0"/><rect x="7" y="6.5" width="4" height="3" fill="#4a88c8"/><rect x="2.5" y="10.5" width="8" height="1" fill="#5a98d0"/><path d="M9 0 H13 V4Z" fill="#2a6aa8"/></svg>
  <svg style="left:27.5px;top:42.5px" width="4" height="3"><path d="M0 0H4L2 2.5Z" fill="#222"/></svg>
  <svg style="left:36px;top:38px" width="13" height="12" viewBox="0 0 13 12"><path d="M0.5 1 H5 L6 2.5 H12 V11.5 H0.5Z" fill="#c8b890" stroke="#9a8a68" stroke-width=".7"/><rect x="2" y="3.5" width="9" height="3" fill="#f4f0e8"/><path d="M0.5 5.5 H12.5 V11.5 H0.5Z" fill="#dccaa0" stroke="#9a8a68" stroke-width=".7"/></svg>
  <svg style="left:52.5px;top:42.5px" width="4" height="3"><path d="M0 0H4L2 2.5Z" fill="#222"/></svg>
  <svg style="left:61px;top:37px" width="13" height="13" viewBox="0 0 13 13"><rect x="0.5" y="0.5" width="12.5" height="12.5" rx="1" fill="#7a2a8c"/><rect x="2" y="1" width="9.5" height="6" fill="#f6f6f6"/><path d="M2.5 3 H11 M2.5 5 H11" stroke="#c8c8c8" stroke-width=".6"/><rect x="3" y="8.5" width="7.5" height="4.5" fill="#e8e4ec"/><rect x="4.2" y="9.5" width="2" height="2.5" fill="#5a3a6a"/></svg>
  <svg style="left:79px;top:42.5px" width="4" height="3"><path d="M0 0H4L2 2.5Z" fill="#222"/></svg>
  <div class="a" style="left:87.5px;top:36px;width:1px;height:16px;background:#dad8d4"></div>
  <svg style="left:94px;top:37px" width="12" height="14" viewBox="0 0 12 14"><path d="M0.5 0.5 H11.5 V13.5 H0.5Z" fill="#f8f8f8" stroke="#c8c8c8" stroke-width=".7"/><path d="M7 2.5 L2 8 L8.5 9.5" stroke="#d42828" stroke-width="1.2" fill="none"/><path d="M10 1 Q7.5 7 9.5 13" stroke="#d42828" stroke-width="1.4" fill="none"/></svg>
  <svg style="left:112.5px;top:38px" width="14" height="12" viewBox="0 0 14 12"><rect x="2.5" y="0.5" width="9" height="3" fill="#e8e8e8" stroke="#666" stroke-width=".7"/><rect x="0.5" y="2.5" width="13" height="8" rx="1.5" fill="#3a3a3a"/><rect x="1.5" y="3.2" width="11" height="2.5" fill="#a8a8a8"/><rect x="3" y="7" width="8" height="2.5" fill="#e6f2e0"/><rect x="4" y="7.6" width="6" height="1.2" fill="#6ac050"/><rect x="1" y="10" width="12" height="1.5" fill="#222"/></svg>
  <svg style="left:132.5px;top:38px" width="14" height="12" viewBox="0 0 14 12"><rect x="2.5" y="0.5" width="9" height="3" fill="#e8e8e8" stroke="#666" stroke-width=".7"/><rect x="0.5" y="2.5" width="13" height="8" rx="1.5" fill="#3a3a3a"/><rect x="1.5" y="3.2" width="11" height="2.5" fill="#a8a8a8"/><rect x="1" y="10" width="12" height="1.5" fill="#222"/><circle cx="8" cy="7" r="3.6" fill="#d8f0d8" stroke="#1c3ab8" stroke-width="1.6"/><circle cx="8" cy="7" r="1.2" fill="#4aa04a"/></svg>
  <div class="a" style="left:152px;top:36px;width:1px;height:16px;background:#dad8d4"></div>
  <svg style="left:158.5px;top:37px" width="11" height="13" viewBox="0 0 11 13"><path d="M2.5 0.5 L7 9 M8.5 0.5 L4 9" stroke="#b8b8b8" stroke-width="1"/><circle cx="3" cy="10.5" r="1.8" fill="none" stroke="#b0b0b0" stroke-width="1"/><circle cx="8" cy="10.5" r="1.8" fill="none" stroke="#b0b0b0" stroke-width="1"/></svg>
  <svg style="left:177px;top:38px" width="13" height="12" viewBox="0 0 13 12"><rect x="0.5" y="0.5" width="7" height="7" fill="#f2f2f2" stroke="#d0d0d0" stroke-width=".7"/><rect x="4.5" y="4" width="8" height="7.5" fill="#f2f2f2" stroke="#d0d0d0" stroke-width=".7"/></svg>
  <svg style="left:197px;top:37px" width="13" height="13" viewBox="0 0 13 13"><rect x="0.5" y="1.5" width="9.5" height="11" rx="1" fill="#d8b070" stroke="#a88040" stroke-width=".7"/><rect x="3" y="0.5" width="4.5" height="2.5" fill="#f0f0f0" stroke="#777" stroke-width=".6"/><rect x="5" y="5.5" width="7.5" height="7" fill="#f4f4f4" stroke="#999" stroke-width=".6"/><rect x="6.5" y="7" width="4.5" height="4" fill="#c8c8c8"/></svg>
  <svg style="left:214px;top:42.5px" width="4" height="3"><path d="M0 0H4L2 2.5Z" fill="#222"/></svg>
  <div class="a" style="left:222.3px;top:36px;width:1px;height:16px;background:#dad8d4"></div>
  <svg style="left:228px;top:37px" width="11" height="14" viewBox="0 0 11 14"><rect x="5.5" y="0" width="3" height="6" rx="1.3" fill="#c08830"/><path d="M3 6 H10 L9 9 H4Z" fill="#4a4a4a"/><path d="M4 9 H9 Q9 12 4 13.5 Q0 13.5 0 13Z" fill="#d02828"/></svg>
  <div class="a" style="left:247.8px;top:36px;width:1px;height:16px;background:#dad8d4"></div>
  <svg style="left:252.5px;top:39px" width="13" height="9" viewBox="0 0 13 9"><path d="M1 4 L5 0.5 V2.5 Q12 2.5 12.5 8.5 Q10 5.5 5 5.5 V7.5Z" fill="#dcdcdc" stroke="#cfcfcf" stroke-width=".5"/></svg>
  <svg style="left:270px;top:42px" width="4" height="3"><path d="M0 0H4L2 2.5Z" fill="#bbb"/></svg>
  <svg style="left:278.3px;top:39px" width="13" height="9" viewBox="0 0 13 9"><path d="M12 4 L8 0.5 V2.5 Q1 2.5 0.5 8.5 Q3 5.5 8 5.5 V7.5Z" fill="#dcdcdc" stroke="#cfcfcf" stroke-width=".5"/></svg>
  <svg style="left:296px;top:42px" width="4" height="3"><path d="M0 0H4L2 2.5Z" fill="#bbb"/></svg>
  <div class="a" style="left:304.8px;top:36px;width:1px;height:16px;background:#dad8d4"></div>
  <svg style="left:309.5px;top:37px" width="15" height="14" viewBox="0 0 15 14"><circle cx="6" cy="6.5" r="4.6" fill="none" stroke="#2a4ab0" stroke-width="1.8"/><path d="M8.5 9 L12.5 13" stroke="#222" stroke-width="2"/><path d="M3 11 L11.5 1.5" stroke="#f0a020" stroke-width="2.2"/><circle cx="12" cy="1.5" r="1.2" fill="#e03030"/></svg>
  <div class="t" style="left:330px;top:37.5px;font-size:7px;font-weight:bold;color:#444">Abc</div>
  <svg style="left:333px;top:44.5px" width="9" height="6" viewBox="0 0 9 6"><path d="M0.8 2.5 L3.5 5 L8.5 0.5" stroke="#3ab83a" stroke-width="1.8" fill="none"/></svg>
  <svg style="left:352px;top:37.5px" width="10" height="13" viewBox="0 0 10 13"><path d="M9 0.5 H4 Q0.5 0.5 0.5 3.8 Q0.5 7 4 7 H5 V12.5 H7 V2 H8 V12.5 H9.5Z" fill="#3a8ad8"/></svg>
  <div class="a" style="left:369.4px;top:36px;width:1px;height:16px;background:#dad8d4"></div>
  <svg style="left:373.3px;top:38.5px" width="14" height="11" viewBox="0 0 14 11"><rect x="0.5" y="0.5" width="13" height="10" fill="#f6f6f6" stroke="#999" stroke-width=".8"/><rect x="0.5" y="0.5" width="13" height="2.5" fill="#aaa"/><path d="M0.5 5.5 H13.5 M0.5 8 H13.5 M5 0.5 V10.5 M9 0.5 V10.5" stroke="#aaa" stroke-width=".6"/></svg>
  <svg style="left:391.5px;top:42.5px" width="4" height="3"><path d="M0 0H4L2 2.5Z" fill="#222"/></svg>
  <svg style="left:400.3px;top:37.5px" width="15" height="12" viewBox="0 0 15 12"><rect x="0.5" y="0.5" width="14" height="11" rx="1" fill="#a8a8a8"/><rect x="2" y="2" width="11" height="8" fill="#e8a020"/><path d="M2 10 L6 5 L9 8 L13 4 V10Z" fill="#5a3a10"/><circle cx="5" cy="4.5" r="1.5" fill="#fff4a0"/></svg>
  <svg style="left:421px;top:37.5px" width="13" height="13" viewBox="0 0 13 13"><circle cx="6.5" cy="6.5" r="6" fill="#e02020"/><path d="M6.5 6.5 H12.5 A6 6 0 0 1 9 12 Z" fill="#3a7ad0"/><path d="M6.5 6.5 L9 12 A6 6 0 0 1 5 12.3Z" fill="#40b040"/></svg>
  <svg style="left:439.7px;top:37px" width="14" height="14" viewBox="0 0 14 14"><rect x="0.5" y="0.5" width="13" height="13" fill="none" stroke="#444" stroke-width="1" stroke-dasharray="1.2 1"/><text x="7" y="11.5" text-anchor="middle" font-family="Liberation Serif" font-weight="bold" font-size="12" fill="#444">T</text></svg>
  <div class="t" style="left:473.5px;top:39.5px;font-size:8px;font-weight:bold;color:#333">»</div>
  <!-- toolbar 2 -->
  <svg style="left:1px;top:60px" width="3" height="16"><g fill="#9a9a9a"><rect x="1" y="0" width="1" height="1"/><rect x="1" y="3" width="1" height="1"/><rect x="1" y="6" width="1" height="1"/><rect x="1" y="9" width="1" height="1"/><rect x="1" y="12" width="1" height="1"/><rect x="1" y="15" width="1" height="1"/></g></svg>
  <div class="a" style="left:8px;top:59.5px;width:83.5px;height:16.5px;border:1px solid #cfcdc8;border-radius:3px;background:#fff"></div>
  <div class="a" style="left:78px;top:60px;width:13px;height:15.5px;border-left:1px solid #cfcdc8;background:#fafafa;border-radius:0 3px 3px 0"></div>
  <svg style="left:81.5px;top:66.5px" width="6" height="4"><path d="M0 0H6L3 3.5Z" fill="#222"/></svg>
  <div class="t" style="left:12px;top:63px;font-size:9.2px;color:#555">Default Style</div>
  <svg style="left:95px;top:60px" width="14" height="14" viewBox="0 0 14 14"><circle cx="6" cy="8" r="5.2" fill="#f0f0f0" stroke="#9a9a9a" stroke-width=".8"/><path d="M7 2.5 A4 4 0 0 1 12.5 5 M12.5 5 L13 2 M12.5 5 L9.5 5" stroke="#2a6ad0" stroke-width="1.3" fill="none"/></svg>
  <svg style="left:114px;top:59.5px" width="15" height="15" viewBox="0 0 15 15"><circle cx="6" cy="8.5" r="5.2" fill="#f0f0f0" stroke="#9a9a9a" stroke-width=".8"/><path d="M11 0.5 L12.2 3.2 L14.8 3.5 L12.8 5.3 L13.4 8 L11 6.6 L8.6 8 L9.2 5.3 L7.2 3.5 L9.8 3.2Z" fill="#f4d020" stroke="#c8a010" stroke-width=".5"/></svg>
  <div class="a" style="left:137px;top:59.5px;width:85px;height:16.5px;border:1px solid #cfcdc8;border-radius:3px;background:#fff"></div>
  <div class="a" style="left:205px;top:60px;width:17px;height:15.5px;border-left:1px solid #cfcdc8;background:#fafafa;border-radius:0 3px 3px 0"></div>
  <svg style="left:210.5px;top:66.5px" width="6" height="4"><path d="M0 0H6L3 3.5Z" fill="#222"/></svg>
  <div class="t" style="left:140.5px;top:63px;font-size:9.2px;color:#4a4a4a">Liberation Seri</div>
  <div class="a" style="left:227.5px;top:59.5px;width:41px;height:16.5px;border:1px solid #cfcdc8;border-radius:3px;background:#fff"></div>
  <div class="a" style="left:251.5px;top:60px;width:16.8px;height:15.5px;border-left:1px solid #cfcdc8;background:#fafafa;border-radius:0 3px 3px 0"></div>
  <svg style="left:257px;top:66.5px" width="6" height="4"><path d="M0 0H6L3 3.5Z" fill="#222"/></svg>
  <div class="t" style="left:232px;top:63px;font-size:9.2px;color:#4a4a4a">12</div>
  <div class="a" style="left:273px;top:60px;width:1px;height:15px;background:#dad8d4"></div>
  <svg style="left:270px;top:56px" width="190" height="22" viewBox="0 0 190 22">
   <text x="13.3" y="15.2" text-anchor="middle" font-family="Liberation Sans" font-weight="bold" font-size="17" fill="#585858">a</text>
   <text x="33.5" y="15.2" text-anchor="middle" font-family="Liberation Serif" font-style="italic" font-weight="bold" font-size="18" fill="#5a5a5a">a</text>
   <text x="53.3" y="14.6" text-anchor="middle" font-family="Liberation Sans" font-weight="bold" font-size="16" fill="#585858">a</text>
   <rect x="49" y="16.3" width="8.5" height="1.4" fill="#585858"/>
   <text x="72.8" y="15.2" text-anchor="middle" font-family="Liberation Sans" font-weight="bold" font-size="16" fill="#585858">a</text>
   <rect x="66.5" y="9.8" width="12.5" height="1.3" fill="#585858"/>
   <rect x="85.6" y="4" width="1" height="15" fill="#dad8d4"/>
   <text x="95" y="15.2" text-anchor="middle" font-family="Liberation Sans" font-weight="bold" font-size="16" fill="#5c5c5c">a</text>
   <text x="101" y="11" text-anchor="middle" font-family="Liberation Sans" font-weight="bold" font-size="10" fill="#3a78c8">b</text>
   <text x="114.5" y="15.2" text-anchor="middle" font-family="Liberation Sans" font-weight="bold" font-size="16" fill="#5c5c5c">a</text>
   <text x="121.5" y="17.8" text-anchor="middle" font-family="Liberation Sans" font-weight="bold" font-size="10" fill="#3a78c8">b</text>
   <rect x="131" y="4" width="1" height="15" fill="#dad8d4"/>
   <text x="141.5" y="15" text-anchor="middle" font-family="Liberation Serif" font-style="italic" font-weight="bold" font-size="18" fill="#5a5a5a">a</text>
   <rect x="136" y="16.4" width="9" height="1.4" fill="#5a5a5a"/>
   <path d="M143.5 13.5 L148.5 18.5 M148.5 13.5 L143.5 18.5" stroke="#e02020" stroke-width="1.9"/>
   <rect x="154.8" y="4" width="1" height="15" fill="#dad8d4"/>
   <text x="166.5" y="14" text-anchor="middle" font-family="Liberation Sans" font-weight="bold" font-size="16" fill="#3a78c8">a</text>
   <rect x="159.2" y="15.3" width="13.8" height="2.8" fill="#d01818"/>
  </svg>
  <svg style="left:447.5px;top:67px" width="5" height="3"><path d="M0 0H5L2.5 3Z" fill="#333"/></svg>
  <div class="t" style="left:473.5px;top:63px;font-size:8px;font-weight:bold;color:#333">»</div>
  <!-- ruler -->
  <div class="a" style="left:0;top:81.5px;width:447.5px;height:8.5px;background:#fff"></div>
  <svg style="left:0;top:81px" width="448" height="12" viewBox="0 0 448 12"><rect x="64.0" y="4" width=".8" height="1" fill="#9a9a9a"/><rect x="71.2" y="4" width=".8" height="1" fill="#9a9a9a"/><rect x="78.3" y="4" width=".8" height="1" fill="#9a9a9a"/><rect x="85.5" y="2.5" width=".8" height="4" fill="#9a9a9a"/><rect x="92.7" y="4" width=".8" height="1" fill="#9a9a9a"/><rect x="99.9" y="4" width=".8" height="1" fill="#9a9a9a"/><rect x="107.0" y="4" width=".8" height="1" fill="#9a9a9a"/><rect x="121.4" y="4" width=".8" height="1" fill="#9a9a9a"/><rect x="128.6" y="4" width=".8" height="1" fill="#9a9a9a"/><rect x="135.7" y="4" width=".8" height="1" fill="#9a9a9a"/><rect x="142.9" y="2.5" width=".8" height="4" fill="#9a9a9a"/><rect x="150.1" y="4" width=".8" height="1" fill="#9a9a9a"/><rect x="157.2" y="4" width=".8" height="1" fill="#9a9a9a"/><rect x="164.4" y="4" width=".8" height="1" fill="#9a9a9a"/><rect x="178.8" y="4" width=".8" height="1" fill="#9a9a9a"/><rect x="185.9" y="4" width=".8" height="1" fill="#9a9a9a"/><rect x="193.1" y="4" width=".8" height="1" fill="#9a9a9a"/><rect x="200.3" y="2.5" width=".8" height="4" fill="#9a9a9a"/><rect x="207.5" y="4" width=".8" height="1" fill="#9a9a9a"/><rect x="214.6" y="4" width=".8" height="1" fill="#9a9a9a"/><rect x="221.8" y="4" width=".8" height="1" fill="#9a9a9a"/><rect x="236.2" y="4" width=".8" height="1" fill="#9a9a9a"/><rect x="243.3" y="4" width=".8" height="1" fill="#9a9a9a"/><rect x="250.5" y="4" width=".8" height="1" fill="#9a9a9a"/><rect x="257.7" y="2.5" width=".8" height="4" fill="#9a9a9a"/><rect x="264.9" y="4" width=".8" height="1" fill="#9a9a9a"/><rect x="272.1" y="4" width=".8" height="1" fill="#9a9a9a"/><rect x="279.2" y="4" width=".8" height="1" fill="#9a9a9a"/><rect x="293.6" y="4" width=".8" height="1" fill="#9a9a9a"/><rect x="300.8" y="4" width=".8" height="1" fill="#9a9a9a"/><rect x="307.9" y="4" width=".8" height="1" fill="#9a9a9a"/><rect x="315.1" y="2.5" width=".8" height="4" fill="#9a9a9a"/><rect x="322.3" y="4" width=".8" height="1" fill="#9a9a9a"/><rect x="329.4" y="4" width=".8" height="1" fill="#9a9a9a"/><rect x="336.6" y="4" width=".8" height="1" fill="#9a9a9a"/><rect x="351.0" y="4" width=".8" height="1" fill="#9a9a9a"/><rect x="358.2" y="4" width=".8" height="1" fill="#9a9a9a"/><rect x="365.3" y="4" width=".8" height="1" fill="#9a9a9a"/><rect x="372.5" y="2.5" width=".8" height="4" fill="#9a9a9a"/><rect x="379.7" y="4" width=".8" height="1" fill="#9a9a9a"/><rect x="386.9" y="4" width=".8" height="1" fill="#9a9a9a"/><rect x="394.0" y="4" width=".8" height="1" fill="#9a9a9a"/><rect x="408.4" y="4" width=".8" height="1" fill="#9a9a9a"/><rect x="415.6" y="4" width=".8" height="1" fill="#9a9a9a"/><rect x="422.7" y="4" width=".8" height="1" fill="#9a9a9a"/><rect x="429.9" y="2.5" width=".8" height="4" fill="#9a9a9a"/><rect x="437.1" y="4" width=".8" height="1" fill="#9a9a9a"/><rect x="444.2" y="4" width=".8" height="1" fill="#9a9a9a"/><text x="171.4" y="7.5" text-anchor="middle" font-family="Liberation Sans" font-size="6.5" fill="#8a8a8a">2</text><text x="229.0" y="7.5" text-anchor="middle" font-family="Liberation Sans" font-size="6.5" fill="#8a8a8a">3</text><text x="286.4" y="7.5" text-anchor="middle" font-family="Liberation Sans" font-size="6.5" fill="#8a8a8a">4</text><text x="343.8" y="7.5" text-anchor="middle" font-family="Liberation Sans" font-size="6.5" fill="#8a8a8a">5</text><text x="401.2" y="7.5" text-anchor="middle" font-family="Liberation Sans" font-size="6.5" fill="#8a8a8a">6</text><path d="M172.7 10.5 L174.2 8.5 L175.7 10.5Z" fill="#8a8a8a"/><path d="M189.7 10.5 L191.2 8.5 L192.7 10.5Z" fill="#8a8a8a"/><path d="M206.6 10.5 L208.1 8.5 L209.6 10.5Z" fill="#8a8a8a"/><path d="M223.4 10.5 L224.9 8.5 L226.4 10.5Z" fill="#8a8a8a"/><path d="M240.3 10.5 L241.8 8.5 L243.3 10.5Z" fill="#8a8a8a"/><path d="M257.3 10.5 L258.8 8.5 L260.3 10.5Z" fill="#8a8a8a"/><path d="M274.1 10.5 L275.6 8.5 L277.1 10.5Z" fill="#8a8a8a"/><path d="M291.0 10.5 L292.5 8.5 L294.0 10.5Z" fill="#8a8a8a"/><path d="M307.9 10.5 L309.4 8.5 L310.9 10.5Z" fill="#8a8a8a"/><path d="M324.9 10.5 L326.4 8.5 L327.9 10.5Z" fill="#8a8a8a"/><path d="M341.7 10.5 L343.2 8.5 L344.7 10.5Z" fill="#8a8a8a"/><path d="M358.6 10.5 L360.1 8.5 L361.6 10.5Z" fill="#8a8a8a"/><path d="M375.5 10.5 L377.0 8.5 L378.5 10.5Z" fill="#8a8a8a"/><path d="M392.4 10.5 L393.9 8.5 L395.4 10.5Z" fill="#8a8a8a"/><path d="M409.3 10.5 L410.8 8.5 L412.3 10.5Z" fill="#8a8a8a"/><path d="M426.3 10.5 L427.8 8.5 L429.3 10.5Z" fill="#8a8a8a"/><path d="M441 10.5 L444.5 6 L448 10.5Z" fill="#fff" stroke="#888" stroke-width=".6"/></svg>
  <div class="a" style="left:0;top:103px;width:448px;height:1px;background:#dcdad6"></div>
  <div class="a" style="left:0;top:104px;width:448px;height:91px;background:#fff"></div>
  <svg style="left:442.5px;top:143px" width="7" height="7"><path d="M0.5 0 V6.5 H6.5" stroke="#aaa" stroke-width=".8" fill="none"/></svg>
  <div class="a" style="left:448px;top:80px;width:4px;height:17px;background:#f0946a"></div>
  <div class="a" style="left:452px;top:79.5px;width:4px;height:116px;background:#fafafa;border-left:1px solid #d8d6d2"></div>
  <div class="a" style="left:452.5px;top:116.7px;width:3.5px;height:44.5px;background:#9a9894"></div>
  <svg style="left:452.5px;top:135px" width="3" height="5"><path d="M0 0 L3 2.5 L0 5Z" fill="#fff"/></svg>
  <div class="a" style="left:456px;top:79.5px;width:24px;height:120px;background:#efeeec;border-left:1px solid #d6d4d0"></div>
  <svg style="left:464px;top:87px" width="8" height="8"><rect x="1" y="1" width="4" height="4" fill="#5a7ab0"/><path d="M4 5 L7 7" stroke="#333" stroke-width="1.2"/></svg>
  <div class="a" style="left:462px;top:102px;width:14px;height:1px;background:#dcdad6"></div>
  <div class="a" style="left:459px;top:105.7px;width:18px;height:17.7px;border:1px solid #cfcdc8;border-radius:3px;background:#f4f3f1"></div>
  <svg style="left:461px;top:107.5px" width="14" height="14" viewBox="0 0 14 14"><path d="M1.5 3.5 A3 3 0 0 0 5.5 6 L10 10.5 A1.8 1.8 0 0 0 12 12.5 A1.8 1.8 0 0 0 12.2 10 L7.8 5.5 A3 3 0 0 0 4.2 1.2 L5.8 3 L4.8 4.6 L3 4.8Z" fill="#f4f4f4" stroke="#7a7a7a" stroke-width=".9"/></svg>
  <svg style="left:462.5px;top:130px" width="11" height="12" viewBox="0 0 11 12"><path d="M0.5 0.5 H7 L10.5 4 V11.5 H0.5Z" fill="#fbfbfb" stroke="#aaa" stroke-width=".8"/></svg>
  <svg style="left:461px;top:149px" width="14" height="15" viewBox="0 0 14 15"><path d="M1 14.5 L12 14.5 L1 4Z" fill="#40b040"/><text x="7.5" y="12" text-anchor="middle" font-family="Liberation Serif" font-weight="bold" font-size="14" fill="#333">T</text></svg>
  <svg style="left:461px;top:171px" width="14" height="12" viewBox="0 0 14 12"><rect x="0.5" y="2.5" width="13" height="9" rx="1" fill="#d8a030" stroke="#a87010" stroke-width=".8"/><rect x="3" y="4.5" width="8" height="4" fill="#f8e8b0"/><path d="M5 2.5 L7 0.5 L9 2.5" stroke="#a87010" fill="none" stroke-width=".8"/></svg>
  <svg style="left:461.5px;top:191px" width="13" height="10" viewBox="0 0 13 10"><circle cx="6.5" cy="6.5" r="5.6" fill="#f2f2f2" stroke="#999" stroke-width=".8"/><path d="M6.5 6.5 L9 3" stroke="#d02020" stroke-width="1.2"/></svg>
  <!-- scrollbar h -->
  <div class="a" style="left:0;top:195px;width:456px;height:4px;background:#fafafa"></div>
  <div class="a" style="left:0;top:195px;width:402px;height:4px;background:#f0946a"></div>
  <!-- status -->
  <div class="a" style="left:0;top:199px;width:480px;height:13px;background:#efeeec;border-top:1px solid #d8d6d2"></div>
  <div class="t" style="left:174.6px;top:202.2px;font-size:7.8px;color:#444;transform:scaleX(.87);transform-origin:0 0">English (USA)</div>

  <div class="a" style="left:220px;top:201.2px;width:1px;height:10px;background:#c8c6c2"></div>
  <div class="a" style="left:261.75px;top:201.2px;width:1px;height:10px;background:#c8c6c2"></div>
  <div class="a" style="left:279.5px;top:201.2px;width:1px;height:10px;background:#c8c6c2"></div>
  <div class="a" style="left:296.5px;top:201.2px;width:1px;height:10px;background:#c8c6c2"></div>
  <div class="a" style="left:313.8px;top:201.2px;width:1px;height:10px;background:#c8c6c2"></div>
  <div class="a" style="left:373.8px;top:201.2px;width:1px;height:10px;background:#c8c6c2"></div>
  <div class="a" style="left:459px;top:201.2px;width:1px;height:10px;background:#c8c6c2"></div>
  <svg style="left:266px;top:202.7px" width="8" height="7"><rect x="0" y="2" width="5" height="3" fill="#666"/><path d="M7 0.5 Q5.5 3.5 7 6.5" stroke="#666" fill="none" stroke-width=".8"/></svg>
  <svg style="left:284px;top:202.7px" width="8" height="8"><path d="M.5 .5 H7 V7.5 H.5Z" fill="none" stroke="#888" stroke-width=".8"/><path d="M2 5 L6 2" stroke="#888" stroke-width=".8"/></svg>
  <svg style="left:334px;top:202.7px" width="36" height="8"><path d="M.5 .5 H4 L5.5 2 V7.5 H.5Z" fill="none" stroke="#777" stroke-width=".8"/><path d="M9.5 .5 H13.5 V7.5 H9.5Z M14 .5 H18 V7.5 H14Z" fill="none" stroke="#999" stroke-width=".8"/><path d="M24.5 .5 H28.5 V7.5 H24.5Z M29 .5 H33 V7.5 H29Z" fill="none" stroke="#999" stroke-width=".8"/></svg>
  <div class="a" style="left:380px;top:205.7px;width:4px;height:1px;background:#555"></div>
  <div class="a" style="left:388.4px;top:205.7px;width:57.3px;height:1px;background:#999"></div>
  <div class="a" style="left:414px;top:203.2px;width:5px;height:5px;border-radius:50%;background:#fff;border:1px solid #777"></div>
  <div class="a" style="left:450px;top:205.7px;width:5px;height:1px;background:#555"></div>
  <div class="a" style="left:452px;top:203.7px;width:1px;height:5px;background:#555"></div>
  <div class="t" style="left:463.4px;top:202.2px;font-size:7.8px;color:#444;transform:scaleX(.9);transform-origin:0 0">100%</div>
</div>

<!-- ================= TERMINAL ================= -->
<div class="a" style="left:340px;top:249px;width:424px;height:196px;box-shadow:0 1px 5px rgba(0,0,0,.25);border-radius:5px 5px 0 0"></div>
<div class="a" style="left:340px;top:249px;width:424px;height:196px;overflow:hidden;border-radius:5px 5px 0 0;background:linear-gradient(#45443e 0,#3c3b37 32px,#300a24 32px)">
  <div class="a" style="left:0;top:0;width:424px;height:32px;background:linear-gradient(#4a4943,#403f3a 4px,#3d3c38 16px,#3c3b37)"></div>
  <div class="t" style="left:164px;top:5px;font-size:8.75px;font-weight:bold;color:#8a8882">admin_net2@ubuntu: ~</div>
  <div class="a" style="left:387.9px;top:5px;width:9px;height:9px;border-radius:50%;background:#5a5954"></div>
  <div class="a" style="left:390px;top:9px;width:4.8px;height:1px;background:#3c3b37"></div>
  <div class="a" style="left:399.5px;top:5px;width:9px;height:9px;border-radius:50%;background:#5a5954"></div>
  <div class="a" style="left:401.7px;top:7.2px;width:4.6px;height:4.6px;border:1px solid #3c3b37"></div>
  <div class="a" style="left:411.8px;top:5px;width:9px;height:9px;border-radius:50%;background:#5a5954"></div>
  <svg style="left:414px;top:7.2px" width="5" height="5"><path d="M.5 .5 L4.5 4.5 M4.5 .5 L.5 4.5" stroke="#3c3b37" stroke-width="1"/></svg>
  <div class="t" style="left:77px;top:22px;font-size:9.2px;color:#cfcdc6">Search</div>
  <div class="t" style="left:111.2px;top:22px;font-size:9.2px;color:#cfcdc6">Terminal</div>
  <div class="t" style="left:152.6px;top:22px;font-size:9.2px;color:#cfcdc6">Help</div>
  <div class="a" style="left:422px;top:32px;width:2px;height:164px;background:#a8a6a2"></div>
  <div style="position:absolute;left:1.7px;top:35px;font-family:'Liberation Mono',monospace;font-size:9px;line-height:10.7px;color:#f0f0f0;white-space:pre">To run a command as administrator (user "root"), use "sudo &lt;command&gt;".
See "man sudo_root" for details.

<span style="color:#8ae234;font-weight:bold">admin_net2@ubuntu</span>:<span style="color:#729fcf;font-weight:bold">~</span>$ </div>
  <div class="a" style="left:114.6px;top:65.4px;width:6.2px;height:11.5px;border:1px solid #e8e8e8"></div>
</div>

<!-- ================= FILES WINDOW ================= -->
<div class="a" style="left:40px;top:96px;width:390px;height:355px;box-shadow:0 3px 14px 2px rgba(0,0,0,.55);border-radius:5px 5px 0 0"></div>
<div class="a" id="fw" style="left:40px;top:96px;width:390px;height:355px;overflow:hidden;border-radius:5px 5px 0 0;background:linear-gradient(#5a5850 0,#48473f 25px,#f1f0ee 25px)">
  <!-- header -->
  <div class="a" style="left:0;top:0;width:390px;height:25px;background:linear-gradient(#5f5d55,#57554d 30%,#48473f);border-top:1px solid #6a6860;border-bottom:1px solid #35342f"></div>
  <div class="a" style="left:5.5px;top:2px;width:39px;height:20px;border:1px solid #46443e;border-radius:3px;background:linear-gradient(#57554e,#4b4a43)"></div>
    <svg style="left:13px;top:8px" width="5" height="8"><path d="M4 0.5 L1 4 L4 7.5" stroke="#a8a69e" stroke-width="1.2" fill="none"/></svg>
  <svg style="left:32px;top:8px" width="5" height="8"><path d="M1 0.5 L4 4 L1 7.5" stroke="#a8a69e" stroke-width="1.2" fill="none"/></svg>
  <div class="a" style="left:49.5px;top:2px;width:77.5px;height:20px;border:1px solid #46443e;border-radius:3px;background:linear-gradient(#57554e,#4b4a43)"></div>
  <svg style="left:54px;top:9px" width="4" height="6"><path d="M3.5 0 L0.5 3 L3.5 6Z" fill="#a8a69e"/></svg>
  <div class="a" style="left:63px;top:2px;width:49.5px;height:20px;background:linear-gradient(#3b3a35,#41403a);border:1px solid #33322d"></div>
  <svg style="left:68px;top:7px" width="10" height="10" viewBox="0 0 10 10"><path d="M1 5.2 L5 1.2 L9 5.2 M2.3 4.2 V9 H4.2 V6.5 H5.8 V9 H7.7 V4.2" stroke="#e6e4de" stroke-width="1.2" fill="none"/></svg>
  <div class="t" style="left:81.5px;top:8px;font-size:8.8px;font-weight:bold;color:#e6e4de">Home</div>
  <svg style="left:119px;top:9px" width="4" height="6"><path d="M0.5 0 L3.5 3 L0.5 6Z" fill="#a8a69e"/></svg>
  <!-- right buttons -->
  <div class="a" style="left:271.5px;top:2px;width:19.5px;height:20px;border:1px solid #46443e;border-radius:3px;background:linear-gradient(#57554e,#4b4a43)"></div>
  <svg style="left:276px;top:7px" width="10" height="10" viewBox="0 0 10 10"><circle cx="4" cy="4" r="2.8" stroke="#e6e4de" stroke-width="1.3" fill="none"/><path d="M6 6 L9 9" stroke="#e6e4de" stroke-width="1.6"/></svg>
  <div class="a" style="left:296px;top:2px;width:20px;height:20px;border:1px solid #46443e;border-radius:3px;background:linear-gradient(#57554e,#4b4a43)"></div>
  <svg style="left:302.5px;top:8px" width="10" height="8" viewBox="0 0 10 8"><rect x="0.3" y="0.5" width="3" height="2.8" fill="#e6e4de"/><rect x="0.3" y="4.5" width="3" height="2.8" fill="#e6e4de"/><rect x="4.8" y="1.2" width="4.5" height="1.3" fill="#e6e4de"/><rect x="4.8" y="5.2" width="4.5" height="1.3" fill="#e6e4de"/></svg>
  <div class="a" style="left:321.5px;top:2px;width:20px;height:20px;border:1px solid #46443e;border-radius:3px;background:linear-gradient(#57554e,#4b4a43)"></div>
  <svg style="left:328px;top:7px" width="9" height="10" viewBox="0 0 9 10"><rect x="0.5" y="1.3" width="7" height="1.4" fill="#e6e4de"/><rect x="0.5" y="4.3" width="7" height="1.4" fill="#e6e4de"/><rect x="0.5" y="7.3" width="7" height="1.4" fill="#e6e4de"/></svg>
  <div class="a" style="left:350.8px;top:6.9px;width:10px;height:10px;border-radius:50%;background:#6a6964"></div>
  <div class="a" style="left:353px;top:11.3px;width:5.6px;height:1.2px;background:#3d3c38"></div>
  <div class="a" style="left:363px;top:6.9px;width:10px;height:10px;border-radius:50%;background:#6a6964"></div>
  <div class="a" style="left:365.3px;top:9.2px;width:5.4px;height:5.4px;border:1.1px solid #3d3c38"></div>
  <div class="a" style="left:375px;top:6.9px;width:10px;height:10px;border-radius:50%;background:#e9541f"></div>
  <svg style="left:377px;top:9px" width="6" height="6"><path d="M1 1 L5 5 M5 1 L1 5" stroke="#3a2418" stroke-width="1.2"/></svg>
  <!-- sidebar -->
  <div class="a" style="left:0;top:25px;width:24px;height:330px;background:#504f47;border-left:1px solid #464540"></div>
  <div class="a" style="left:24px;top:25px;width:94px;height:330px;background:#615e52;border-right:1px solid #b8b6b0"></div>
  <div class="a" style="left:0;top:47px;width:24px;height:18px;background:#5d5b52"></div>

  <!-- sidebar icons (window-relative coords) -->
  <svg style="left:6px;top:30px" width="12" height="12" viewBox="0 0 12 12"><circle cx="6" cy="6" r="4.6" stroke="#e0ded8" stroke-width="1.2" fill="none"/><path d="M3.8 5.2 L6 7 L8.4 3.6" stroke="#e0ded8" stroke-width="1.1" fill="none"/></svg>
  <svg style="left:6px;top:50px" width="12" height="12" viewBox="0 0 12 12"><path d="M1 6.3 L6 1.5 L11 6.3 M2.6 5 V10.5 H5 V7.5 H7 V10.5 H9.4 V5" stroke="#e9703c" stroke-width="1.4" fill="none"/></svg>
  <svg style="left:6px;top:69px" width="12" height="12" viewBox="0 0 12 12"><path d="M0.5 2 H5 L6 3.5 H11.5 V11 H0.5Z" fill="#e0ded8"/><rect x="1.5" y="4.5" width="9.5" height="5.5" fill="#d0cec8"/><rect x="1.5" y="4.5" width="10" height="1" fill="#e0ded8"/></svg>
  <svg style="left:6px;top:88px" width="12" height="12" viewBox="0 0 12 12"><path d="M2.5 0.8 H7.2 L10 3.6 V11.2 H2.5Z M7 1 V3.8 H9.8" stroke="#e0ded8" stroke-width="1.1" fill="none"/></svg>
  <svg style="left:6px;top:107px" width="12" height="12" viewBox="0 0 12 12"><path d="M6 0.5 V8.5 M3 5.8 L6 8.8 L9 5.8" stroke="#e0ded8" stroke-width="1.2" fill="none"/><rect x="2" y="10.3" width="8" height="1.2" fill="#e0ded8"/></svg>
  <svg style="left:6px;top:126px" width="12" height="12" viewBox="0 0 12 12"><path d="M4 9 V2 L10 1 V8" stroke="#e0ded8" stroke-width="1.2" fill="none"/><circle cx="2.8" cy="9.3" r="1.8" stroke="#e0ded8" stroke-width="1.1" fill="none"/><circle cx="8.8" cy="8.5" r="1.8" stroke="#e0ded8" stroke-width="1.1" fill="none"/></svg>
  <svg style="left:6px;top:145px" width="12" height="12" viewBox="0 0 12 12"><path d="M0.8 3.2 H3.5 L4.5 1.8 H7.5 L8.5 3.2 H11.2 V10.5 H0.8Z" fill="#e0ded8"/><circle cx="6" cy="6.8" r="2.2" fill="#4e4d47"/></svg>
  <svg style="left:6px;top:164px" width="12" height="12" viewBox="0 0 12 12"><rect x="3" y="3" width="8.5" height="6.5" fill="#e0ded8"/><path d="M0.5 4 L3 5.5 V7 L0.5 8.5Z" fill="#e0ded8"/></svg>
  <svg style="left:6px;top:183px" width="12" height="12" viewBox="0 0 12 12"><path d="M1.5 2.5 H10.5 M4.5 2.5 V1 H7.5 V2.5 M2.5 3 L3.2 11 H8.8 L9.5 3" stroke="#e0ded8" stroke-width="1.1" fill="none"/><path d="M4.8 4.5 V9.5 M7.2 4.5 V9.5" stroke="#e0ded8" stroke-width=".8"/></svg>
  <svg style="left:7px;top:209px" width="10" height="10" viewBox="0 0 10 10"><path d="M5 1 V9 M1 5 H9" stroke="#e0ded8" stroke-width="1.2"/></svg>
  <div class="t" style="left:32px;top:32.5px;font-size:9.2px;color:#dcdad2">Recent</div>
  <div class="t" style="left:32px;top:52.0px;font-size:9.2px;color:#e9703c">Home</div>
  <div class="t" style="left:32px;top:71.5px;font-size:9.2px;color:#dcdad2">Desktop</div>
  <div class="t" style="left:32px;top:90.5px;font-size:9.2px;color:#dcdad2">Documents</div>
  <div class="t" style="left:32px;top:109.5px;font-size:9.2px;color:#dcdad2">Downloads</div>
  <div class="t" style="left:32px;top:128.5px;font-size:9.2px;color:#dcdad2">Music</div>
  <div class="t" style="left:32px;top:147.5px;font-size:9.2px;color:#dcdad2">Pictures</div>
  <div class="t" style="left:32px;top:167.0px;font-size:9.2px;color:#dcdad2">Videos</div>
  <div class="t" style="left:32px;top:186.0px;font-size:9.2px;color:#dcdad2">Trash</div>
  <div class="t" style="left:32px;top:210.5px;font-size:9.2px;color:#dcdad2">Other Locations</div>

  <!-- content icons -->
  <svg style="left:135px;top:33px" width="28" height="23" viewBox="0 0 28 23"><rect x="0" y="0" width="28" height="23" rx="1.2" fill="url(#dg)"/><rect x="0" y="0" width="28" height="4" rx="1" fill="#e4dfc4"/><rect x="0" y="3.6" width="28" height=".6" fill="#b8a890"/><rect x="3" y="7" width="3" height="3" fill="#f2eaf2"/><rect x="3" y="13" width="3" height="3" fill="#f2eaf2"/></svg>
  <svg style="left:191px;top:33px" width="28" height="23" viewBox="0 0 28 23"><use href="#fold"/><path d="M13 7 H23.5 L27 10.5 V23 H13Z" fill="#f2f2f2" stroke="#c8c8c8" stroke-width=".5"/><path d="M15 11 H22 M15 13 H25 M15 15 H25 M15 17 H25 M15 19 H24" stroke="#b8b8b8" stroke-width=".6"/></svg>
  <svg style="left:246.5px;top:33px" width="28" height="23" viewBox="0 0 28 23"><use href="#fold"/><defs><linearGradient id="dla" x1="0" y1="0" x2="0" y2="1"><stop offset="0" stop-color="#f6f6f6"/><stop offset="1" stop-color="#c8c8c8"/></linearGradient></defs><path d="M16.5 7.5 H22.5 V14.5 H26.5 L19.5 23 L12.5 14.5 H16.5Z" fill="url(#dla)" stroke="#b8b8b8" stroke-width=".5"/></svg>
  <svg style="left:302px;top:33px" width="28" height="23" viewBox="0 0 28 23"><use href="#fold"/><path d="M15.5 19 V9 L25 7 V17" stroke="#4a4a4a" stroke-width="2" fill="none"/><circle cx="13.3" cy="19" r="2.6" fill="#4a4a4a"/><circle cx="22.8" cy="17.2" r="2.6" fill="#4a4a4a"/></svg>
  <svg style="left:135px;top:78px" width="28" height="23" viewBox="0 0 28 23"><use href="#fold"/><defs><linearGradient id="ph" x1="0" y1="0" x2="1" y2="1"><stop offset="0" stop-color="#6a5a78"/><stop offset="1" stop-color="#2e2238"/></linearGradient></defs><path d="M8 12.5 L17.5 7 L22 15 L12.5 20.5Z" fill="url(#ph)" stroke="#d0d0d0" stroke-width="1.2"/><rect x="13" y="10" width="12" height="12.5" fill="url(#ph)" stroke="#ececec" stroke-width="1.5"/></svg>
  <svg style="left:191px;top:78px" width="28" height="23" viewBox="0 0 28 23"><use href="#fold"/><defs><linearGradient id="pb" x1="0" y1="0" x2="0" y2="1"><stop offset="0" stop-color="#f8f8f8"/><stop offset="1" stop-color="#c8c8c8"/></linearGradient></defs><ellipse cx="19.8" cy="11.5" rx="2.8" ry="4.2" fill="url(#pb)"/><path d="M12.5 23 Q12.5 17.5 16 16.5 L18 15.5 H21.5 L23.5 16.5 Q27 17.5 27 23Z" fill="url(#pb)"/></svg>
  <svg style="left:246.5px;top:78px" width="28" height="23" viewBox="0 0 28 23"><use href="#fold"/><path d="M12.5 6.5 H23.5 L27 10 V23 H12.5Z" fill="#ececec" stroke="#b8b8b8" stroke-width=".5"/><rect x="15.5" y="10" width="8" height="9" fill="none" stroke="#9a9a9a" stroke-width=".6"/><text x="19.5" y="17.5" text-anchor="middle" font-size="8" font-family="Liberation Sans" fill="#8a8a8a">a</text><path d="M12.5 14 L19.5 23 M14 10 V22" stroke="#aaa" stroke-width=".6"/></svg>
  <svg style="left:302px;top:78px" width="28" height="23" viewBox="0 0 28 23"><use href="#fold"/><defs><linearGradient id="vd" x1="0" y1="0" x2="0" y2="1"><stop offset="0" stop-color="#b070c8"/><stop offset="1" stop-color="#6a3a88"/></linearGradient></defs><rect x="13" y="7" width="12.5" height="16" fill="#2a2a2a"/><rect x="15.5" y="8" width="7.5" height="6.5" fill="url(#vd)"/><rect x="15.5" y="15.5" width="7.5" height="6.5" fill="url(#vd)"/><g fill="#888"><rect x="13.8" y="8" width="1" height="1"/><rect x="13.8" y="10.5" width="1" height="1"/><rect x="13.8" y="13" width="1" height="1"/><rect x="13.8" y="15.5" width="1" height="1"/><rect x="13.8" y="18" width="1" height="1"/><rect x="13.8" y="20.5" width="1" height="1"/><rect x="23.7" y="8" width="1" height="1"/><rect x="23.7" y="10.5" width="1" height="1"/><rect x="23.7" y="13" width="1" height="1"/><rect x="23.7" y="15.5" width="1" height="1"/><rect x="23.7" y="18" width="1" height="1"/><rect x="23.7" y="20.5" width="1" height="1"/></g></svg>
  <svg style="left:135px;top:123px" width="28" height="23" viewBox="0 0 28 23"><use href="#fold"/><path d="M16.5 22.5 Q18 17 22 16.5 V15 L25 17.8 L22 21 V19 Q19.5 19 18 22.5Z" fill="#222"/><rect x="21.5" y="15.5" width="3.5" height="3.5" fill="#222"/></svg>
  <div class="t" style="left:129px;top:60px;width:40px;text-align:center;font-size:9.2px;color:#3c3c3c">Desktop</div>
  <div class="t" style="left:180px;top:60px;width:50px;text-align:center;font-size:9.2px;color:#3c3c3c">Documents</div>
  <div class="t" style="left:235.5px;top:60px;width:50px;text-align:center;font-size:9.2px;color:#3c3c3c">Downloads</div>
  <div class="t" style="left:291px;top:60px;width:50px;text-align:center;font-size:9.2px;color:#3c3c3c">Music</div>
  <div class="t" style="left:124px;top:104.7px;width:50px;text-align:center;font-size:9.2px;color:#3c3c3c">Pictures</div>
  <div class="t" style="left:180px;top:104.7px;width:50px;text-align:center;font-size:9.2px;color:#3c3c3c">Public</div>
  <div class="t" style="left:235.5px;top:104.7px;width:50px;text-align:center;font-size:9.2px;color:#3c3c3c">Templates</div>
  <div class="t" style="left:291px;top:104.7px;width:50px;text-align:center;font-size:9.2px;color:#3c3c3c">Videos</div>
  <div class="t" style="left:124px;top:149.5px;width:50px;text-align:center;font-size:9.2px;color:#3c3c3c">Examples</div>
</div>

</body></html>
